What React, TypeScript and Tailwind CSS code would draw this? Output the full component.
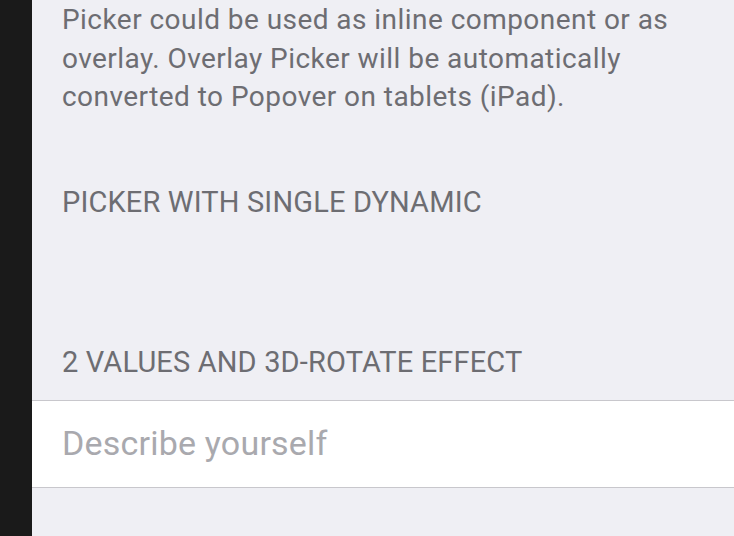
export default function App() {
  return (
    <div className="flex h-[536px] w-full overflow-hidden" style={{ fontFamily: "Roboto, 'Noto Sans', sans-serif" }}>
      {/* left dark edge */}
      <div className="w-[32px] shrink-0 bg-[#1a1a1a]" />

      {/* page content */}
      <div className="flex-1 bg-[#efeff4]">
        <p className="pl-[30px] pr-[30px] pt-[1px] text-[28px] leading-[38.5px] tracking-[0.45px] text-[#6d6d72]">
          Picker could be used as inline component or as overlay. Overlay Picker will be automatically converted to Popover on tablets (iPad).
        </p>

        <div className="mt-[66px] pl-[30px] text-[29px] leading-[38px] tracking-[0.15px] text-[#6d6d72]">
          PICKER WITH SINGLE DYNAMIC
        </div>

        <div className="mt-[122px] pl-[30px] text-[29px] leading-[38px] tracking-[0.15px] text-[#6d6d72]">
          2 VALUES AND 3D-ROTATE EFFECT
        </div>

        <div className="mt-[19px] flex h-[88px] items-center border-y border-[#c8c7cc] bg-white pl-[30px]">
          <input
            className="w-full bg-transparent text-[34px] tracking-[0.2px] text-[#333] outline-none placeholder:text-[#a9a9ae]"
            placeholder="Describe yourself"
          />
        </div>
      </div>
    </div>
  );
}
